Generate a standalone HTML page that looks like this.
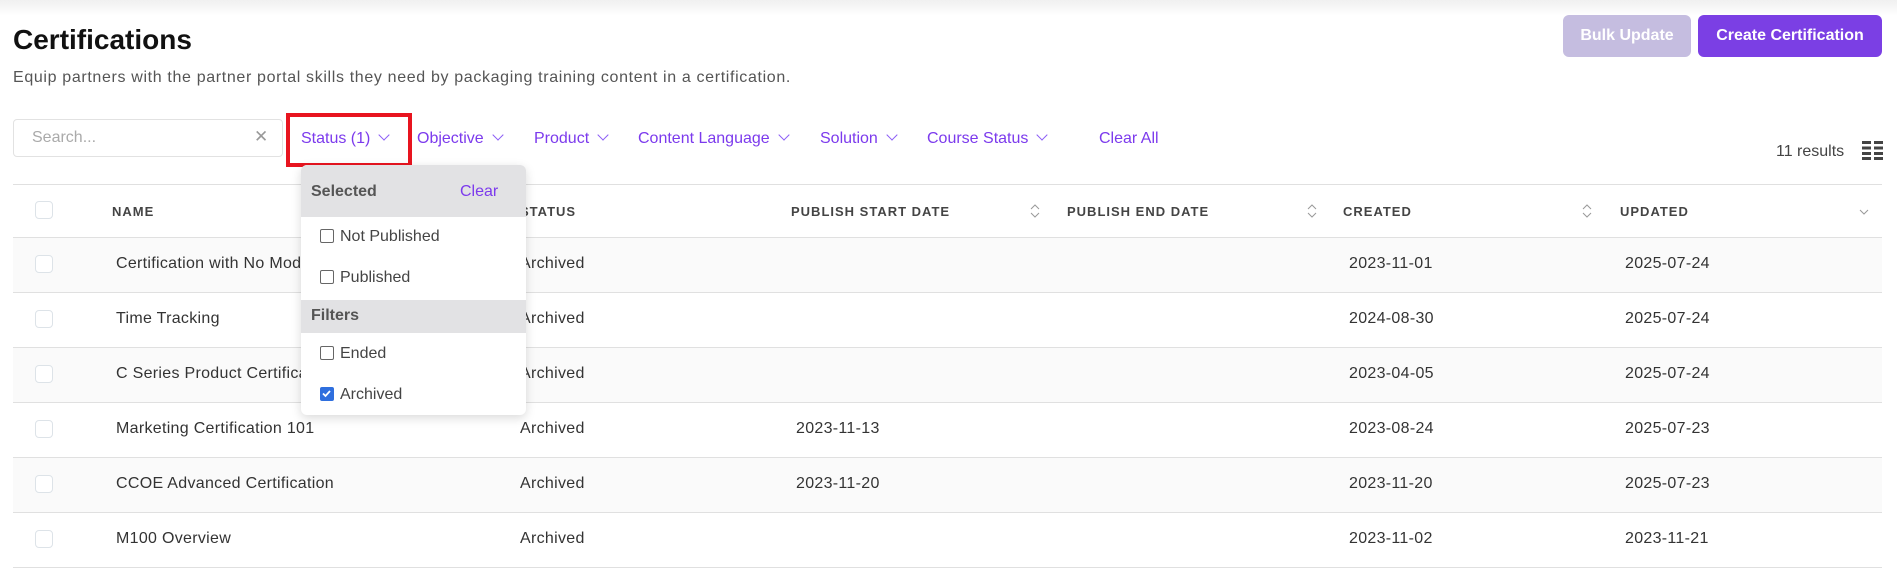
<!DOCTYPE html>
<html><head><meta charset="utf-8"><style>
*{box-sizing:border-box;margin:0;padding:0}
body{width:1897px;height:573px;overflow:hidden;background:#fff;font-family:"Liberation Sans",sans-serif;position:relative;color:#222}
.a{position:absolute;white-space:nowrap}
.top{position:absolute;left:0;top:0;width:1897px;height:16px;background:linear-gradient(#f0f0f0,#fff)}
h1{position:absolute;left:13px;top:24px;font-size:28px;font-weight:bold;color:#111}
.sub{left:13px;top:69px;font-size:16px;color:#555;letter-spacing:.65px}
.btn{position:absolute;top:15px;height:42px;border-radius:6px;color:#fff;font-size:16px;font-weight:bold;text-align:center;line-height:42px}
.search{position:absolute;left:13px;top:119px;width:270px;height:38px;border:1px solid #e2e2e2;border-radius:4px}
.f{top:130px;font-size:16px;color:#7c3aed}
.chev{display:inline-block;width:8px;height:8px;border-right:1.3px solid #8b5cf6;border-bottom:1.3px solid #8b5cf6;transform:rotate(45deg);margin-left:10px;position:relative;top:-4px}
.hl{position:absolute;left:13px;width:1869px;height:1px;background:#e0e0e0}
.row{position:absolute;left:13px;width:1869px;height:55px}
.cb{position:absolute;left:35px;width:18px;height:18px;border:1px solid #dde3e8;border-radius:4px;background:#fff}
.th{top:204px;font-size:13px;font-weight:bold;color:#444;letter-spacing:1px}
.td{font-size:16px;color:#333;letter-spacing:.3px}
.sort{position:absolute;top:202px;width:10px;height:18px}
.dd{position:absolute;left:301px;top:165px;width:225px;height:250px;background:#fff;border-radius:6px;box-shadow:0 3px 10px rgba(0,0,0,.15);overflow:hidden}
.dh{position:absolute;left:0;width:225px;background:#e2e2e4;font-weight:bold;color:#555;font-size:16px}
.di{position:absolute;left:19px;font-size:16px;color:#444}
.di i{display:inline-block;width:14px;height:14px;border:1.5px solid #666;border-radius:2px;vertical-align:-2px;margin-right:6px}
</style></head><body>
<div class="top"></div>
<h1>Certifications</h1>
<div class="a sub">Equip partners with the partner portal skills they need by packaging training content in a certification.</div>
<div class="btn" style="left:1563px;width:128px;background:#c5bde0">Bulk Update</div>
<div class="btn" style="left:1698px;width:184px;background:#7b3fe4">Create Certification</div>
<div class="search"><span class="a" style="left:18px;top:9px;font-size:16px;color:#aaa">Search...</span><span class="a" style="left:240px;top:7px;font-size:17px;color:#999">✕</span></div>
<div class="a" style="left:286px;top:113px;width:126px;height:54px;border:4px solid #e8141f"></div>
<div class="a f" style="left:301px">Status (1)<span class="chev"></span></div>
<div class="a f" style="left:417px">Objective<span class="chev"></span></div>
<div class="a f" style="left:534px">Product<span class="chev"></span></div>
<div class="a f" style="left:638px">Content Language<span class="chev"></span></div>
<div class="a f" style="left:820px">Solution<span class="chev"></span></div>
<div class="a f" style="left:927px">Course Status<span class="chev"></span></div>
<div class="a f" style="left:1099px">Clear All</div>
<div class="a" style="left:1776px;top:143px;font-size:16px;color:#444">11 results</div>
<svg class="a" style="left:1862px;top:141px" width="21" height="19"><g fill="#444"><rect x="0" y="0" width="9" height="3"/><rect x="12" y="0" width="9" height="3"/><rect x="0" y="5.5" width="9" height="3"/><rect x="12" y="5.5" width="9" height="3"/><rect x="0" y="11" width="9" height="3"/><rect x="12" y="11" width="9" height="3"/><rect x="0" y="16" width="9" height="3"/><rect x="12" y="16" width="9" height="3"/></g></svg>
<div class="hl" style="top:184px"></div>
<div class="cb" style="top:201px"></div>
<div class="a th" style="left:112px">NAME</div>
<div class="a th" style="left:520px">STATUS</div>
<div class="a th" style="left:791px">PUBLISH START DATE</div>
<div class="a th" style="left:1067px">PUBLISH END DATE</div>
<div class="a th" style="left:1343px">CREATED</div>
<div class="a th" style="left:1620px">UPDATED</div>
<svg class="sort" style="left:1030px"><path d="M1 7l4-4 4 4M1 11l4 4 4-4" fill="none" stroke="#999" stroke-width="1"/></svg>
<svg class="sort" style="left:1307px"><path d="M1 7l4-4 4 4M1 11l4 4 4-4" fill="none" stroke="#999" stroke-width="1"/></svg>
<svg class="sort" style="left:1582px"><path d="M1 7l4-4 4 4M1 11l4 4 4-4" fill="none" stroke="#999" stroke-width="1"/></svg>
<svg class="sort" style="left:1859px"><path d="M1 8l4 4 4-4" fill="none" stroke="#999" stroke-width="1"/></svg>
<div class="hl" style="top:237px"></div>

<div class="row" style="top:238px;background:#fafafa"></div>
<div class="row" style="top:293px;background:#fff"></div>
<div class="row" style="top:348px;background:#fafafa"></div>
<div class="row" style="top:403px;background:#fff"></div>
<div class="row" style="top:458px;background:#fafafa"></div>
<div class="row" style="top:513px;background:#fff"></div>
<div class="hl" style="top:292px"></div><div class="hl" style="top:347px"></div><div class="hl" style="top:402px"></div><div class="hl" style="top:457px"></div><div class="hl" style="top:512px"></div><div class="hl" style="top:567px"></div>

<div class="cb" style="top:255px"></div><div class="a td" style="left:116px;top:255px">Certification with No Modules</div><div class="a td" style="left:520px;top:255px">Archived</div><div class="a td" style="left:1349px;top:255px">2023-11-01</div><div class="a td" style="left:1625px;top:255px">2025-07-24</div>
<div class="cb" style="top:310px"></div><div class="a td" style="left:116px;top:310px">Time Tracking</div><div class="a td" style="left:520px;top:310px">Archived</div><div class="a td" style="left:1349px;top:310px">2024-08-30</div><div class="a td" style="left:1625px;top:310px">2025-07-24</div>
<div class="cb" style="top:365px"></div><div class="a td" style="left:116px;top:365px">C Series Product Certification</div><div class="a td" style="left:520px;top:365px">Archived</div><div class="a td" style="left:1349px;top:365px">2023-04-05</div><div class="a td" style="left:1625px;top:365px">2025-07-24</div>
<div class="cb" style="top:420px"></div><div class="a td" style="left:116px;top:420px">Marketing Certification 101</div><div class="a td" style="left:520px;top:420px">Archived</div><div class="a td" style="left:796px;top:420px">2023-11-13</div><div class="a td" style="left:1349px;top:420px">2023-08-24</div><div class="a td" style="left:1625px;top:420px">2025-07-23</div>
<div class="cb" style="top:475px"></div><div class="a td" style="left:116px;top:475px">CCOE Advanced Certification</div><div class="a td" style="left:520px;top:475px">Archived</div><div class="a td" style="left:796px;top:475px">2023-11-20</div><div class="a td" style="left:1349px;top:475px">2023-11-20</div><div class="a td" style="left:1625px;top:475px">2025-07-23</div>
<div class="cb" style="top:530px"></div><div class="a td" style="left:116px;top:530px">M100 Overview</div><div class="a td" style="left:520px;top:530px">Archived</div><div class="a td" style="left:1349px;top:530px">2023-11-02</div><div class="a td" style="left:1625px;top:530px">2023-11-21</div>

<div class="dd">
<div class="dh" style="top:0;height:52px"><span class="a" style="left:10px;top:18px">Selected</span><span class="a" style="left:159px;top:18px;color:#7c3aed;font-weight:normal">Clear</span></div>
<div class="di" style="top:63px"><i></i>Not Published</div>
<div class="di" style="top:104px"><i></i>Published</div>
<div class="dh" style="top:135px;height:33px"><span class="a" style="left:10px;top:7px">Filters</span></div>
<div class="di" style="top:180px"><i></i>Ended</div>
<div class="di" style="top:221px"><i style="background:#2f6fde;border-color:#2f6fde;position:relative"><svg style="position:absolute;left:0;top:0" width="11" height="11"><path d="M2 5.5l2.5 2.5 4.5-5" fill="none" stroke="#fff" stroke-width="1.8"/></svg></i>Archived</div>
</div>
</body></html>
